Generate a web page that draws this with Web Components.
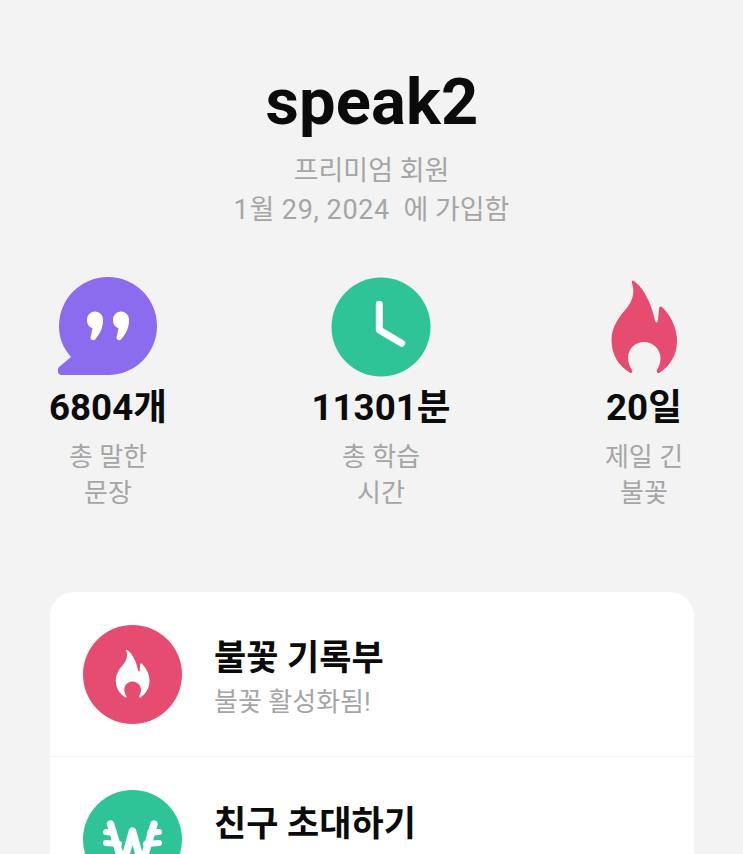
<!DOCTYPE html>
<html lang="ko"><head><meta charset="utf-8"><style>
html,body{margin:0;padding:0;background:#f3f3f3;height:854px;overflow:hidden}
body{font-family:Roboto,"Noto Sans CJK KR",sans-serif}
</style></head><body>
<profile-screen></profile-screen>
<script>
const FLAME='M44 15C55 23 62 40 65 55C65.500 57 68 57 68 54L69 43C69.500 40 71 40 73 42C81 50 87 62 87 75C87 89 80 100 70 106.500C67.500 108 66 106 67 104C69.500 100 70.500 96 70.500 92C70.500 83 63 76 54 76C45 76 38 83 38 92C38 96 39.500 100 42 104C43 106 41.500 108 39.500 106.500C29 100 21.500 89 21.500 74C21.500 60 30 50 36 43C42 36 45.500 27 42 17.500C41.500 15 42.500 14 44 15Z';
const COMMA='M28 43A8 8 0 0 1 44 42C44.500 50 41 57 36 62.500C35 64 31 63 31.500 60.500L33.500 51C30 50.500 28 47 28 43Z';
function def(name,css,html){customElements.define(name,class extends HTMLElement{constructor(){super();this.attachShadow({mode:'open'}).innerHTML='<style>'+css+'</style>'+html(this)}})}
def('profile-head',`:host{display:block;text-align:center;font-family:Roboto,"Noto Sans CJK KR",sans-serif}
h1{margin:0;font-size:65px;line-height:74px;font-weight:700;color:#0b0b0b;letter-spacing:.2px;padding-left:1px}
p{margin:0;font-size:27px;line-height:39px;color:#a5a5a5;white-space:pre}
.sub{margin-top:13px}
.d{letter-spacing:.7px;word-spacing:-.5px}`,()=>`<h1>speak2</h1><p class="sub">프리미엄 회원</p><p><span class="d">1월 29, 2024</span>  에 가입함</p>`);
def('stat-item',`:host{display:flex;flex-direction:column;align-items:center;font-family:Roboto,"Noto Sans CJK KR",sans-serif}
.icon{height:100px;width:100px;display:flex;justify-content:center}
.v{margin-top:8px;font-size:36.700px;line-height:46px;font-weight:700;color:#0b0b0b;white-space:nowrap}
.l{margin-top:8px;font-size:26px;line-height:36px;color:#a5a5a5;text-align:center;white-space:nowrap}
::slotted(svg){display:block}`,e=>`<div class="icon"><slot></slot></div><div class="v">${e.getAttribute('value')}</div><div class="l">${e.getAttribute('l1')}<br>${e.getAttribute('l2')}</div>`);
def('menu-row',`:host{display:flex;align-items:center;gap:32px;height:165px;padding:0 33px;box-sizing:border-box;font-family:Roboto,"Noto Sans CJK KR",sans-serif;border-bottom:1px solid #f2f2f2}
:host(:last-child){border-bottom:0}
.c{width:99px;height:99px;border-radius:50%;flex:none;display:flex;align-items:center;justify-content:center}
.x{margin-top:10px}
.t{font-size:35px;line-height:44px;font-weight:700;color:#0b0b0b}
.s{font-size:26px;line-height:38px;min-height:38px;color:#a5a5a5;margin-top:2px}
::slotted(svg){display:block}`,e=>`<div class="c" style="background:${e.getAttribute('color')}"><slot></slot></div><div class="x"><div class="t">${e.getAttribute('title')}</div><div class="s">${e.getAttribute('sub')||''}</div></div>`);
def('menu-card',`:host{display:block;margin:0 49px 0 50px;background:#fff;border-radius:24px 24px 0 0}`,()=>`<slot></slot>`);
def('profile-screen',`:host{display:block;padding-top:65px}
.stats{display:grid;grid-template-columns:118px 145px 138px 154px 80px;margin:47px 0 0 49px}
.stats stat-item:nth-child(2){grid-column:3}.stats stat-item:nth-child(3){grid-column:5}
stat-item{justify-self:center}
menu-card{margin-top:81px}`,()=>`
<profile-head></profile-head>
<div class="stats">
<stat-item value="6804개" l1="총 말한" l2="문장"><svg width="100" height="100" viewBox="-1 0 100 100"><path fill="#8b6bee" d="M49 0A49 49 0 0 1 49 98L3 98C-1 98 -3 93 0 90L12 80C4 71 0 61 0 49A49 49 0 0 1 49 0Z"/><path fill="#fff" d="${COMMA}"/><path fill="#fff" d="${COMMA}" transform="translate(26 0)"/></svg></stat-item>
<stat-item value="11301분" l1="총 학습" l2="시간"><svg width="100" height="100" viewBox="0 0 100 100"><circle cx="50" cy="50" r="49.500" fill="#2ec497"/><path d="M48.300 27.300V53L70.700 66.300" fill="none" stroke="#fff" stroke-width="7" stroke-linecap="round" stroke-linejoin="round"/></svg></stat-item>
<stat-item value="20일" l1="제일 긴" l2="불꽃"><svg width="100" height="100" viewBox="4 11 100 100"><path fill="#e64c70" d="${FLAME}"/></svg></stat-item>
</div>
<menu-card>
<menu-row color="#e64c70" title="불꽃 기록부" sub="불꽃 활성화됨!"><svg width="35" height="50" viewBox="20 14 68 95"><path fill="#fff" d="${FLAME}"/></svg></menu-row>
<menu-row color="#2ec497" title="친구 초대하기"><svg width="99" height="99" viewBox="0 0 99 99"><path d="M27.500 34L40 75L49.500 41L59 75L71 34" fill="none" stroke="#fff" stroke-width="7.500" stroke-linecap="round" stroke-linejoin="round"/><path d="M23 42L31 43M23 53L36 54M76 42L67 43M76 53L63 54" fill="none" stroke="#fff" stroke-width="6" stroke-linecap="round"/></svg></menu-row>
</menu-card>`);
</script>
</body></html>
